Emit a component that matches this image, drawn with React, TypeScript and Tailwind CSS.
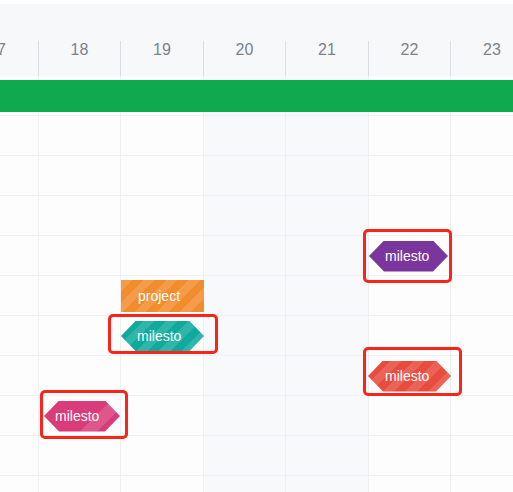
import type { ReactNode } from "react";

const days = [
  { d: 17, w: "w-[83px]", weekend: false },
  { d: 18, w: "w-[82px]", weekend: false },
  { d: 19, w: "w-[83px]", weekend: false },
  { d: 20, w: "w-[82px]", weekend: true },
  { d: 21, w: "w-[83px]", weekend: true },
  { d: 22, w: "w-[82px]", weekend: false },
  { d: 23, w: "w-[83px]", weekend: false },
];

const stripes =
  "bg-[repeating-linear-gradient(135deg,rgba(255,255,255,0.13)_0_8px,transparent_8px_16px)]";
const hexagon =
  "[clip-path:polygon(15px_0,calc(100%_-_15px)_0,100%_50%,calc(100%_-_15px)_100%,15px_100%,0_50%)]";

function Milestone({ className, textClass }: { className: string; textClass: string }) {
  return (
    <div className={`h-[31px] shrink-0 flex items-center ${hexagon} ${className}`}>
      <span className={`block overflow-hidden whitespace-nowrap text-[14px] text-white ${textClass}`}>
        milestone
      </span>
    </div>
  );
}

function Highlight({ className }: { className: string }) {
  return <div className={`absolute border-[3px] border-[#fb2418] rounded-[5px] ${className}`} />;
}

function Row({ children, pad = "" }: { children?: ReactNode; pad?: string }) {
  return (
    <div className="relative h-[40px]">
      <div className="absolute inset-0 flex -ml-[44px]">
        {days.map((c) => (
          <div
            key={c.d}
            className={`${c.w} shrink-0 border-r border-b border-[#eef0f3] ${
              c.weekend ? "bg-[#f8f9fb]" : "bg-[#fdfdfe]"
            }`}
          />
        ))}
      </div>
      <div className={`relative h-full flex items-center ${pad}`}>{children}</div>
    </div>
  );
}

export default function App() {
  return (
    <div className="relative w-[513px] h-[492px] overflow-hidden bg-white font-['Liberation_Sans',Arial,sans-serif]">
      {/* timeline header */}
      <div className="h-[76px] mt-[4px] bg-[#f7f8fa] flex flex-col justify-end">
        <div className="flex -ml-[44px] h-[39px]">
          {days.map((c) => (
            <div
              key={c.d}
              className={`${c.w} shrink-0 border-r border-[#dcdee2] text-center text-[16px] leading-[18px] text-[#7c828a]`}
            >
              {c.d}
            </div>
          ))}
        </div>
      </div>

      {/* grid body */}
      <div className="-mt-[4px] flex flex-col">
        <Row>
          <div className="w-full h-[32px] bg-[#0fa94f]" />
        </Row>
        <Row />
        <Row />
        <Row />
        <Row pad="pl-[369px]">
          <Milestone className="w-[79px] bg-[#7b369d]" textClass="ml-[16px] w-[44px]" />
        </Row>
        <Row pad="pl-[121px]">
          <div className={`w-[83px] h-[32px] flex items-center pl-[17px] bg-[#f28d2e] ${stripes}`}>
            <span className="text-[14px] text-white">project</span>
          </div>
        </Row>
        <Row pad="pl-[121px]">
          <Milestone className={`w-[83px] bg-[#10aa9d] ${stripes}`} textClass="ml-[16px] w-[45px]" />
        </Row>
        <Row pad="pl-[368px]">
          <Milestone className={`w-[83px] bg-[#e84c3e] ${stripes}`} textClass="ml-[17px] w-[44px]" />
        </Row>
        <Row pad="pl-[44px]">
          <Milestone
            className="w-[76px] bg-[#d93c79] bg-[linear-gradient(135deg,transparent_62%,rgba(255,255,255,0.14)_62%_78%,transparent_78%)]"
            textClass="ml-[11px] w-[44px]"
          />
        </Row>
        <Row />
        <Row />
      </div>

      {/* selection highlights */}
      <Highlight className="left-[363px] top-[229px] w-[89px] h-[54px]" />
      <Highlight className="left-[108px] top-[314px] w-[110px] h-[40px]" />
      <Highlight className="left-[363px] top-[347px] w-[99px] h-[49px]" />
      <Highlight className="left-[40px] top-[390px] w-[88px] h-[49px]" />
    </div>
  );
}
